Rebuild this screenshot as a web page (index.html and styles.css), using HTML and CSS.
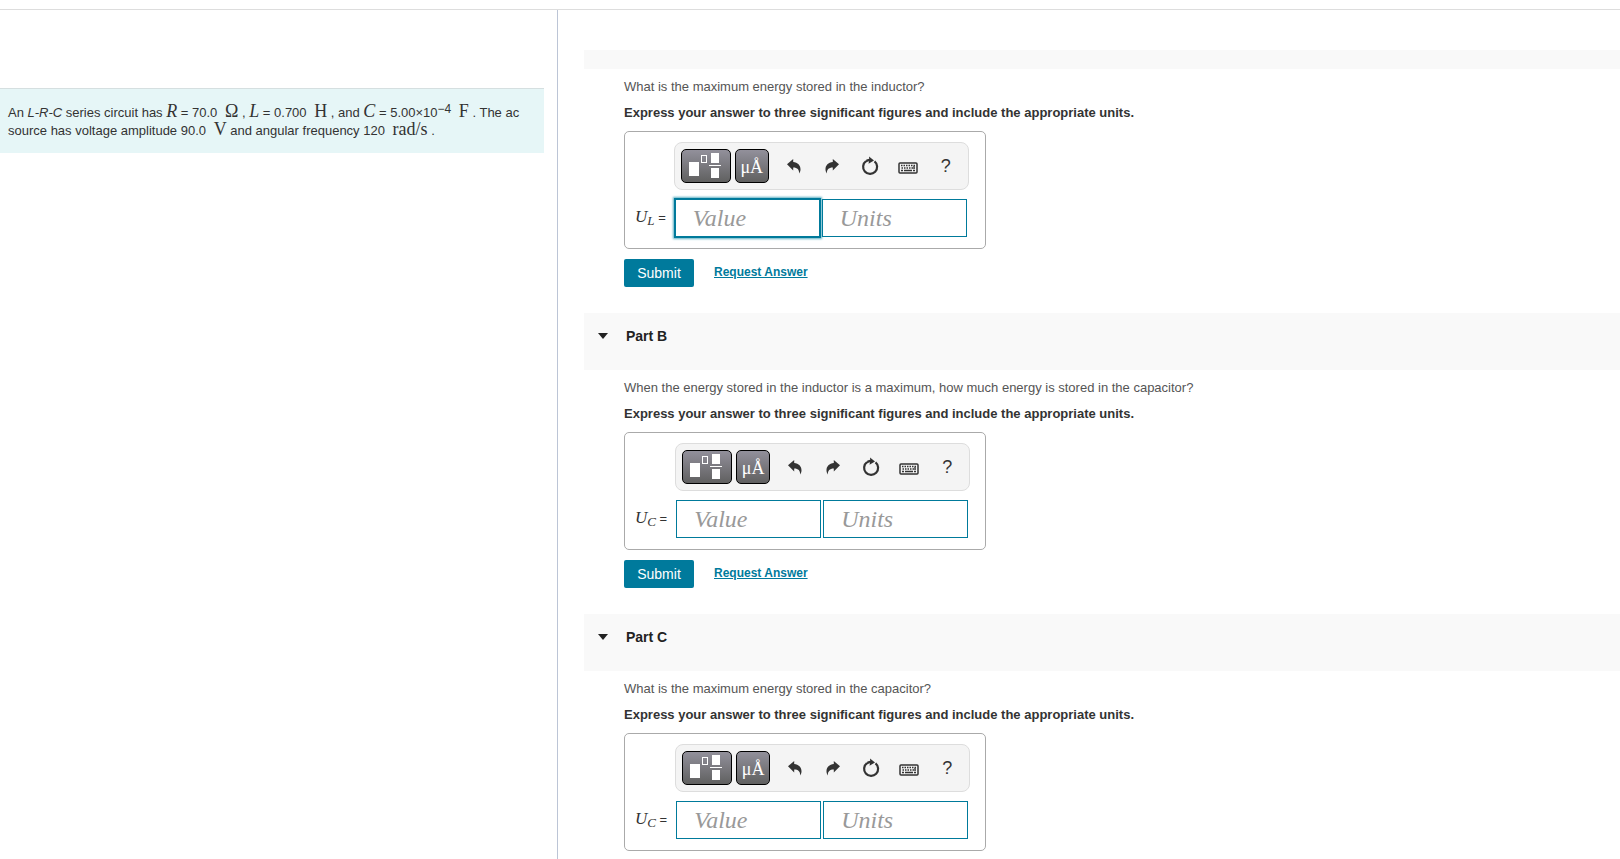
FILE: index.html
```
<!DOCTYPE html>
<html lang="en">
  <head>
    <meta charset="UTF-8">
    <title>L-R-C Series Circuit</title>
    <link rel="stylesheet" href="styles.css">
  </head>
  <body>
    <!-- shared toolbar icons -->
    <svg class="sprite" aria-hidden="true">
      <symbol id="icon-template" viewBox="0 0 50 34">
        <rect x="8" y="13" width="10" height="14" fill="#fff"/>
        <rect x="20.5" y="6.5" width="5" height="7" fill="none" stroke="#fff"/>
        <rect x="30" y="4" width="8" height="10" fill="#fff"/>
        <rect x="28" y="16" width="12" height="1" fill="#fff"/>
        <rect x="30" y="19" width="8" height="10" fill="#fff"/>
      </symbol>
      <symbol id="icon-undo" viewBox="0 0 16 16">
        <path d="M1 6.300L7.200 1v3.100c4.500.3 7.400 3.500 7.300 7.300 0 1.500-.5 2.700-1.400 4 .2-3.600-1.600-5.800-5.900-5.800v2.800z"/>
      </symbol>
      <symbol id="icon-redo" viewBox="0 0 16 16">
        <path d="M15 6.300L8.800 1v3.100C4.300 4.400 1.400 7.600 1.500 11.400c0 1.500.5 2.700 1.400 4-.2-3.600 1.600-5.800 5.900-5.800v2.800z"/>
      </symbol>
      <symbol id="icon-reset" viewBox="0 0 18 20">
        <path d="M5 5.200A7 7 0 1 0 13.500 5.400" fill="none" stroke="#333" stroke-width="2.200"/>
        <path d="M8 0.500l5 4-5.500 3.300.5-2.500-3.600 1.200 1-3 2.800-.8z"/>
      </symbol>
      <symbol id="icon-keyboard" viewBox="0 0 20 12">
        <rect x="1" y="1" width="18" height="10" rx="1" fill="none" stroke="#333" stroke-width="1.500"/>
        <path d="M3 3.500h14M3.500 6h13" fill="none" stroke="#333" stroke-width="1.500" stroke-dasharray="1.500 1"/>
        <path d="M3 8.500h2M6 8.500h8M15 8.500h2M16 4v3" fill="none" stroke="#333" stroke-width="1.300"/>
      </symbol>
    </svg>

    <div class="page">
      <aside class="intro">
        <p class="problem">An <i>L-R-C</i> series circuit has <span class="math"><i>R</i></span> = 70.0 <span class="math unit">Ω</span> , <span class="math"><i>L</i></span> = 0.700 <span class="math unit">H</span> , and <span class="math"><i>C</i></span> = 5.00×10<sup>−4</sup> <span class="math unit">F</span> . The ac source has voltage amplitude 90.0 <span class="math unit">V</span> and angular frequency 120 <span class="math unit">rad/s</span> .</p>
      </aside>

      <main class="parts">
        <section class="part">
          <div class="part-header short"></div>
          <form class="part-body">
            <p class="question">What is the maximum energy stored in the inductor?</p>
            <p class="instructions">Express your answer to three significant figures and include the appropriate units.</p>
            <div class="answer">
              <div class="toolbar">
                <button type="button" class="tool dark wide" aria-label="Templates"><svg><use href="#icon-template"/></svg></button>
                <button type="button" class="tool dark symbols">μÅ</button>
                <button type="button" class="tool" aria-label="Undo"><svg class="icon"><use href="#icon-undo"/></svg></button>
                <button type="button" class="tool" aria-label="Redo"><svg class="icon"><use href="#icon-redo"/></svg></button>
                <button type="button" class="tool" aria-label="Reset"><svg class="icon reset"><use href="#icon-reset"/></svg></button>
                <button type="button" class="tool" aria-label="Keyboard"><svg class="icon keyboard"><use href="#icon-keyboard"/></svg></button>
                <button type="button" class="tool help">?</button>
              </div>
              <label for="valueA"><i>U<sub>L</sub></i> =</label>
              <div class="fields">
                <input type="text" id="valueA" class="active" placeholder="Value">
                <input type="text" id="unitsA" placeholder="Units" aria-label="Units">
              </div>
            </div>
            <div class="actions">
              <button type="submit" class="submit">Submit</button>
              <a href="#">Request Answer</a>
            </div>
          </form>
        </section>

        <section class="part">
          <div class="part-header">
            <span class="arrow"></span>
            <h2>Part B</h2>
          </div>
          <form class="part-body">
            <p class="question">When the energy stored in the inductor is a maximum, how much energy is stored in the capacitor?</p>
            <p class="instructions">Express your answer to three significant figures and include the appropriate units.</p>
            <div class="answer">
              <div class="toolbar">
                <button type="button" class="tool dark wide" aria-label="Templates"><svg><use href="#icon-template"/></svg></button>
                <button type="button" class="tool dark symbols">μÅ</button>
                <button type="button" class="tool" aria-label="Undo"><svg class="icon"><use href="#icon-undo"/></svg></button>
                <button type="button" class="tool" aria-label="Redo"><svg class="icon"><use href="#icon-redo"/></svg></button>
                <button type="button" class="tool" aria-label="Reset"><svg class="icon reset"><use href="#icon-reset"/></svg></button>
                <button type="button" class="tool" aria-label="Keyboard"><svg class="icon keyboard"><use href="#icon-keyboard"/></svg></button>
                <button type="button" class="tool help">?</button>
              </div>
              <label for="valueB"><i>U<sub>C</sub></i> =</label>
              <div class="fields">
                <input type="text" id="valueB" placeholder="Value">
                <input type="text" id="unitsB" placeholder="Units" aria-label="Units">
              </div>
            </div>
            <div class="actions">
              <button type="submit" class="submit">Submit</button>
              <a href="#">Request Answer</a>
            </div>
          </form>
        </section>

        <section class="part">
          <div class="part-header">
            <span class="arrow"></span>
            <h2>Part C</h2>
          </div>
          <form class="part-body">
            <p class="question">What is the maximum energy stored in the capacitor?</p>
            <p class="instructions">Express your answer to three significant figures and include the appropriate units.</p>
            <div class="answer">
              <div class="toolbar">
                <button type="button" class="tool dark wide" aria-label="Templates"><svg><use href="#icon-template"/></svg></button>
                <button type="button" class="tool dark symbols">μÅ</button>
                <button type="button" class="tool" aria-label="Undo"><svg class="icon"><use href="#icon-undo"/></svg></button>
                <button type="button" class="tool" aria-label="Redo"><svg class="icon"><use href="#icon-redo"/></svg></button>
                <button type="button" class="tool" aria-label="Reset"><svg class="icon reset"><use href="#icon-reset"/></svg></button>
                <button type="button" class="tool" aria-label="Keyboard"><svg class="icon keyboard"><use href="#icon-keyboard"/></svg></button>
                <button type="button" class="tool help">?</button>
              </div>
              <label for="valueC"><i>U<sub>C</sub></i> =</label>
              <div class="fields">
                <input type="text" id="valueC" placeholder="Value">
                <input type="text" id="unitsC" placeholder="Units" aria-label="Units">
              </div>
            </div>
          </form>
        </section>
      </main>
    </div>
  </body>
</html>
```

FILE: styles.css
```
* {
  box-sizing: border-box;
}

body {
  background-color: #fff;
  color: #333;
  font-family: "Liberation Sans", Arial, sans-serif;
  font-size: 13px;
  margin: 0;
  padding-top: 9px;
}

p, h2 {
  margin: 0;
}

.sprite {
  display: none;
}

.page {
  border-top: 1px solid #ddd;
  display: flex;
  min-height: calc(100vh - 9px);
}

/* left column */
.intro {
  border-right: 1px solid #bcc5d6;
  flex: none;
  padding: 78px 13px 0 0;
  width: 558px;
}

.problem {
  background-color: #e6f6f7;
  border-top: 1px solid #d5dfe0;
  line-height: 18px;
  padding: 15px 20px 13px 8px;
}

.math {
  font-family: "Liberation Serif", "Times New Roman", serif;
  font-size: 18px;
  line-height: 14px;
}

.unit {
  margin-left: 4px;
}

.problem sup {
  font-size: 12px;
  line-height: 0;
  vertical-align: 4px;
}

/* right column */
.parts {
  flex: 1;
  padding: 40px 0 0 26px;
}

.part-header {
  align-items: flex-start;
  background-color: #f9f9f9;
  display: flex;
  height: 57px;
  padding: 14px;
}

.part-header.short {
  height: 19px;
  padding: 0;
}

.part-header h2 {
  color: #222;
  font-size: 14px;
  line-height: 18px;
  margin-left: 18px;
}

.arrow {
  border: 5px solid transparent;
  border-bottom: 0;
  border-top: 6px solid #222;
  margin-top: 6px;
}

.part-body {
  padding: 8px 40px 26px;
}

.question {
  color: #555;
  line-height: 20px;
}

.instructions {
  font-weight: bold;
  line-height: 20px;
  margin: 6px 0 8px;
}

.answer {
  align-items: center;
  border: 1px solid #aaa;
  border-radius: 5px;
  column-gap: 8px;
  display: grid;
  grid-template-columns: auto 295px;
  height: 118px;
  justify-content: start;
  padding: 10px 0 11px 10px;
  row-gap: 9px;
  width: 362px;
}

.toolbar {
  align-items: center;
  background-color: #f4f4f4;
  border: 1px solid #ddd;
  border-radius: 8px;
  display: flex;
  grid-column: 2;
  height: 48px;
  padding: 0 2px 0 6px;
}

.tool {
  align-items: center;
  background: none;
  border: 0;
  display: flex;
  flex: none;
  height: 34px;
  justify-content: center;
  padding: 0;
  width: 38px;
}

.tool.dark {
  background: linear-gradient(#92909b, #606060);
  border: 1px solid #000;
  border-radius: 5px;
  color: #fff;
  margin-right: 4px;
}

.tool.wide {
  width: 50px;
}

.tool.wide svg {
  flex: none;
  height: 34px;
  width: 50px;
}

.tool.symbols {
  font-family: "Liberation Serif", "Times New Roman", serif;
  font-size: 18px;
  margin-right: 6px;
  padding-top: 2px;
  width: 34px;
}

.icon {
  fill: #333;
  height: 16px;
  width: 16px;
}

.icon.reset {
  height: 20px;
  width: 18px;
}

.icon.keyboard {
  height: 12px;
  margin-top: 4px;
  width: 20px;
}

.tool.help {
  color: #333;
  font-family: "Liberation Sans", Arial, sans-serif;
  font-size: 18px;
}

.answer label {
  padding-bottom: 2px;
  white-space: nowrap;
}

.answer label i {
  font-family: "Liberation Serif", "Times New Roman", serif;
  font-size: 17px;
}

.answer sub {
  font-size: 13px;
  line-height: 0;
  vertical-align: -3px;
}

.fields {
  display: flex;
  gap: 2px;
  padding: 0 1px;
}

.fields input {
  border: 1px solid #007a9b;
  color: #333;
  font-family: "Liberation Serif", "Times New Roman", serif;
  font-size: 24px;
  height: 38px;
  outline: 0;
  padding: 0 17px;
  width: 145px;
}

.fields input::placeholder {
  color: #999;
  font-style: italic;
}

.fields input.active {
  box-shadow: 0 0 2px 2px #5fb0c3;
  outline: 1px solid #007a9b;
}

.actions {
  display: flex;
  gap: 20px;
  margin-top: 10px;
}

.submit {
  background-color: #007a9c;
  border: 0;
  border-radius: 2px;
  color: #fff;
  cursor: pointer;
  font-family: inherit;
  font-size: 14px;
  height: 28px;
  width: 70px;
}

.actions a {
  color: #007a9c;
  font-size: 12px;
  font-weight: bold;
  line-height: 26px;
}
```
